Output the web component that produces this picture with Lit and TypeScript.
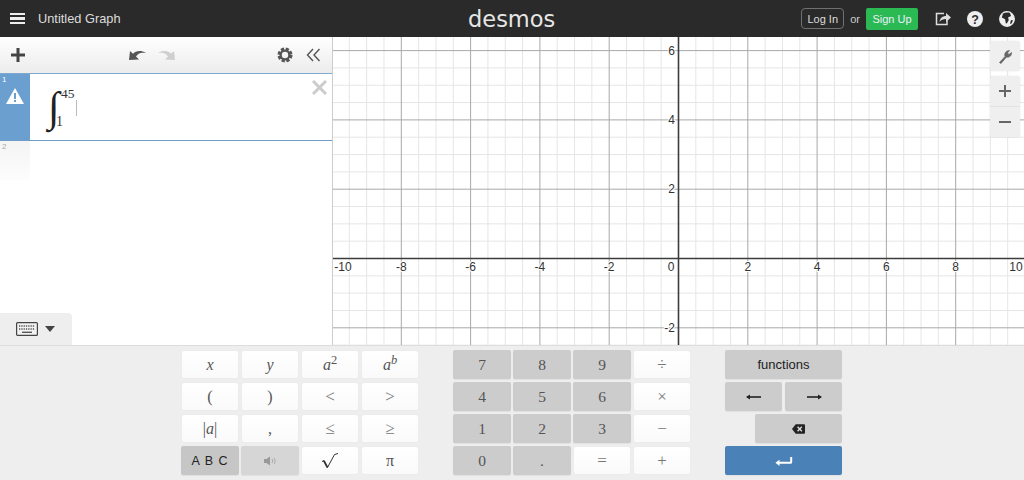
import { LitElement, html, css, svg } from "lit";
import { customElement } from "lit/decorators.js";

const W = 692, H = 308, OX = 345.5, OY = 221.5, U = 34.65;

function graph() {
  const minor: unknown[] = [];
  const major: unknown[] = [];
  const labels: unknown[] = [];
  for (let i = -20; i <= 24; i++) {
    const x = OX + (i * U) / 2;
    if (i === 0) continue;
    if (i % 4 === 0) major.push(svg`<line class="maj" x1=${x} x2=${x} y1="0" y2=${H}></line>`);
    else minor.push(svg`<line class="min" x1=${x} x2=${x} y1="0" y2=${H}></line>`);
  }
  for (let i = -6; i <= 14; i++) {
    const y = OY - (i * U) / 2;
    if (i === 0) continue;
    if (i % 4 === 0) major.push(svg`<line class="maj" x1="0" x2=${W} y1=${y} y2=${y}></line>`);
    else minor.push(svg`<line class="min" x1="0" x2=${W} y1=${y} y2=${y}></line>`);
  }
  for (const n of [-10, -8, -6, -4, -2, 2, 4, 6, 8, 10]) {
    const x = n === -10 ? 10 : n === 10 ? 683 : OX + n * U;
    labels.push(svg`<text class="lab" x=${x} y="234" text-anchor="middle">${n}</text>`);
  }
  labels.push(svg`<text class="lab" x="338" y="234" text-anchor="middle">0</text>`);
  for (const n of [6, 4, 2, -2]) {
    labels.push(svg`<text class="lab" x="342" y=${OY - n * U + 4} text-anchor="end">${n}</text>`);
  }
  return svg`<svg class="plot" width=${W} height=${H} viewBox="0 0 ${W} ${H}">
    ${minor}${major}
    <line class="axis" x1="0" x2=${W} y1=${OY} y2=${OY}></line>
    <line class="axis" x1=${OX} x2=${OX} y1="0" y2=${H}></line>
    ${labels}
  </svg>`;
}

const gear = html`<svg width="16" height="16" viewBox="0 0 16 16"><circle cx="8" cy="8" r="6" fill="none" stroke="#555" stroke-width="3" stroke-dasharray="3.1 1.61"></circle><circle cx="8" cy="8" r="4.4" fill="none" stroke="#555" stroke-width="2.4"></circle></svg>`;

const arrowL = html`<svg width="16" height="8" viewBox="0 0 16 8"><path d="M1 4h14" stroke="#222" stroke-width="1.6"></path><path d="M0 4l4-2.6v5.2z" fill="#222"></path></svg>`;
const arrowR = html`<svg width="16" height="8" viewBox="0 0 16 8"><path d="M1 4h14" stroke="#222" stroke-width="1.6"></path><path d="M16 4l-4-2.6v5.2z" fill="#222"></path></svg>`;
const backspace = html`<svg width="13" height="10" viewBox="0 0 14 10"><path d="M4 0h9a1 1 0 0 1 1 1v8a1 1 0 0 1-1 1H4L0 5z" fill="#222"></path><path d="M6 2.6l4.6 4.8M10.6 2.6L6 7.4" stroke="#ddd" stroke-width="1.5"></path></svg>`;
const enter = html`<svg width="18" height="10" viewBox="0 0 20 11"><path d="M18 1v5.500a1 1 0 0 1-1 1H3" fill="none" stroke="#fff" stroke-width="2.200"></path><path d="M0.5 7.500L5 4v7z" fill="#fff"></path></svg>`;
const speaker = html`<svg width="13" height="10" viewBox="0 0 13 10"><path d="M0 3h2.5L6 .5v9L2.5 7H0z" fill="#999"></path><path d="M8 3c.8 1.200.8 2.800 0 4M10 1.800c1.400 2 1.400 4.400 0 6.400" fill="none" stroke="#aaa" stroke-width="1"></path></svg>`;
const sqrt = html`<svg width="18" height="17" viewBox="0 0 18 17"><path d="M1 9.500l1.800-.9L6.500 15.500 13.500 2.500 17 1.500" fill="none" stroke="#333" stroke-width="1"></path><path d="M2.800 8.600L6.500 15.500" stroke="#333" stroke-width="1.800"></path></svg>`;

type Key = { k: unknown; c?: string };
const left: Key[] = [
  { k: html`<i>x</i>`, c: "m" }, { k: html`<i>y</i>`, c: "m" },
  { k: html`<i>a</i><sup>2</sup>`, c: "m" }, { k: html`<i>a</i><sup><i>b</i></sup>`, c: "m" },
  { k: "(", c: "m" }, { k: ")", c: "m" }, { k: "<", c: "m lite" }, { k: ">", c: "m lite" },
  { k: html`|<i>a</i>|`, c: "m" }, { k: ",", c: "m" }, { k: "≤", c: "m lite" }, { k: "≥", c: "m lite" },
  { k: "A B C", c: "abc dark" }, { k: speaker, c: "mute" }, { k: sqrt, c: "m" }, { k: "π", c: "m" },
];
const mid: Key[] = [
  { k: "7", c: "g" }, { k: "8", c: "g" }, { k: "9", c: "g" }, { k: "÷", c: "m lite" },
  { k: "4", c: "g" }, { k: "5", c: "g" }, { k: "6", c: "g" }, { k: "×", c: "m lite" },
  { k: "1", c: "g" }, { k: "2", c: "g" }, { k: "3", c: "g" }, { k: "−", c: "m lite" },
  { k: "0", c: "g" }, { k: ".", c: "g" }, { k: "=", c: "m lite" }, { k: "+", c: "m lite" },
];

@customElement("app-root")
export class AppRoot extends LitElement {
  static styles = css`
    :host { display: flex; flex-direction: column; width: 1024px; height: 480px; overflow: hidden; font-family: "Liberation Sans", Arial, sans-serif; background: #fff; position: relative; }
    .top { flex: 0 0 37px; background: #2a2a2a; display: flex; align-items: center; color: #e8e8e8; position: relative; }
    .burger { margin-left: 10px; width: 15px; height: 12px; display: flex; flex-direction: column; justify-content: space-between; }
    .burger span { height: 2.4px; background: #eee; }
    .title { margin-left: 13px; font-size: 12.800px; color: #ddd; }
    .logo { position: absolute; left: 468px; top: 4px; font-family: "DejaVu Sans", sans-serif; font-size: 22.500px; font-weight: 400; color: #e6e6e6; line-height: 30px; }
    .right { margin-left: auto; display: flex; align-items: center; padding-right: 9px; }
    .login { width: 43px; height: 21px; box-sizing: border-box; border: 1px solid #707070; border-radius: 4px; font-size: 11px; display: flex; align-items: center; justify-content: center; color: #ddd; }
    .or { font-size: 11px; margin: 0 6px; color: #ccc; }
    .signup { width: 52px; height: 22px; background: #2bb954; border-radius: 2px; font-size: 11px; display: flex; align-items: center; justify-content: center; color: #eef; }
    .ic { display: flex; margin-left: 16px; }
    .ic.first { margin-left: 17px; }
    .main { flex: 1 1 auto; display: flex; min-height: 0; position: relative; }
    .panel { width: 332px; flex: none; border-right: 1px solid #ccc; display: flex; flex-direction: column; background: #fff; }
    .tools { flex: 0 0 36px; background: linear-gradient(#fff, #ececec); display: flex; align-items: center; position: relative; }
    .tools > * { position: absolute; display: flex; }
    .plus { left: 11px; top: 11px; }
    .undo { left: 128px; top: 11px; }
    .redo { left: 157px; top: 11px; }
    .gear { left: 277px; top: 10px; }
    .coll { left: 306px; top: 11px; }
    .expr { height: 68px; box-sizing: border-box; border-top: 1px solid #7fa9d1; border-bottom: 1px solid #6f9dc9; display: flex; }
    .tab { width: 30px; flex: none; position: relative; font-size: 8px; }
    .expr .tab { background: #6a9fd0; color: #fff; }
    .warn { position: absolute; left: 6px; top: 14px; display: flex; }
    .no { position: absolute; left: 2px; top: 1px; }
    .math { flex: 1; position: relative; font-family: "Liberation Serif", serif; color: #222; }
    .int { position: absolute; left: 18px; top: 11px; font-size: 42px; line-height: 44px; letter-spacing: -3px; font-family: "Liberation Serif", serif; }
    .hi { position: absolute; left: 31px; top: 13px; font-size: 13.500px; line-height: 14px; color: #333; }
    .lo { position: absolute; left: 26px; top: 41px; font-size: 14px; line-height: 14px; color: #333; }
    .caret { position: absolute; left: 46px; top: 26px; width: 1px; height: 16px; background: #bbb; }
    .x { position: absolute; right: 5px; top: 6px; display: flex; }
    .next { height: 39px; display: flex; }
    .next .tab { background: linear-gradient(#f4f4f4, #fdfdfd); color: #aaa; }
    .graph { flex: 1; position: relative; overflow: hidden; }
    .plot { display: block; }
    .min { stroke: #e6e6e6; stroke-width: 1; }
    .maj { stroke: #a8a8a8; stroke-width: 1; }
    .axis { stroke: #3c3c3c; stroke-width: 1.600; }
    .lab { font-size: 12px; fill: #333; paint-order: stroke; stroke: #fff; stroke-width: 2px; font-family: "Liberation Sans", sans-serif; }
    .gbtns { position: absolute; left: 657px; top: 4px; width: 30px; display: flex; flex-direction: column; gap: 5px; }
    .gb { width: 30px; background: #efefef; border-radius: 3px; display: flex; flex-direction: column; align-items: center; box-shadow: 0 0 2px rgba(0,0,0,.1); }
    .gb span { height: 30px; display: flex; align-items: center; justify-content: center; }
    .gb span + span { border-top: 1px solid #e2e2e2; width: 100%; }
    .kbd { position: absolute; left: 0; bottom: 0; width: 72px; height: 32px; background: #eee; border-radius: 0 4px 0 0; display: flex; align-items: center; padding-left: 16px; box-sizing: border-box; gap: 7px; }
    .pad { flex: 0 0 135px; box-sizing: border-box; background: #eee; border-top: 1px solid #ddd; display: flex; justify-content: center; gap: 34px; padding: 4px 1px 0 0; }
    .grid { display: grid; grid-template-columns: repeat(4, 58px); grid-auto-rows: 29px; gap: 3px 2px; }
    .fn { display: grid; grid-template-columns: repeat(4, 27px); grid-auto-rows: 29px; gap: 3px; }
    .key { display: flex; align-items: center; justify-content: center; border-radius: 2px; font-family: "Liberation Serif", serif; font-size: 15px; color: #444; background: #ccc; box-shadow: 0 1px 1px rgba(0,0,0,.06); }
    .key.m { background: linear-gradient(#fff, #fafafa); margin: 1px; box-shadow: 0 0 1px rgba(0,0,0,.1); font-size: 16px; color: #555; }
    .key.lite { color: #777; font-size: 17px; }
    .key sup { font-size: 12.500px; line-height: 0; position: relative; top: -5px; }
    .key.g { font-size: 15.500px; color: #555; background: #ccc; }
    .key.dark { background: #c6c6c6; }
    .key.abc { font-family: "Liberation Sans", sans-serif; font-size: 12.500px; letter-spacing: 1px; color: #222; }
    .key.mute { background: #d6d6d6; }
    .key.sans { font-family: "Liberation Sans", sans-serif; font-size: 13px; color: #222; }
    .s4 { grid-column: span 4; }
    .s2 { grid-column: span 2; }
    .s3 { grid-column: 2 / span 3; }
    .key.go { background: #4a82b8; }
  `;

  render() {
    return html`
      <div class="top">
        <div class="burger"><span></span><span></span><span></span></div>
        <div class="title">Untitled Graph</div>
        <div class="logo">desmos</div>
        <div class="right">
          <div class="login">Log In</div>
          <div class="or">or</div>
          <div class="signup">Sign Up</div>
          <div class="ic first"><svg width="16" height="15" viewBox="0 0 16 15"><path d="M9 2.500H1.500v11h10.500V9.500" fill="none" stroke="#ddd" stroke-width="1.500"></path><path d="M4.500 11c.5-4 3-6 6.500-6V2l5 4.500-5 4.500V8c-3 0-4.800.8-6.500 3z" fill="#ddd"></path></svg></div>
          <div class="ic"><svg width="16" height="16" viewBox="0 0 16 16"><circle cx="8" cy="8" r="8" fill="#eee"></circle><text x="8" y="12.500" text-anchor="middle" font-size="12.500" font-weight="700" font-family="Liberation Sans" fill="#2a2a2a">?</text></svg></div>
          <div class="ic"><svg width="16" height="16" viewBox="0 0 16 16"><circle cx="8" cy="8" r="7.200" fill="#eee" stroke="#eee" stroke-width="1.500"></circle><path d="M4 2.500c2-1 5-1.200 7-.5l1 3-3 1.500.8 2.500-2 3.500-1-.2-.7-4-3.300-1.800z M12 9l2 .5-1.500 3-1.500.5z" fill="#2a2a2a"></path></svg></div>
        </div>
      </div>
      <div class="main">
        <div class="panel">
          <div class="tools">
            <span class="plus"><svg width="14" height="14" viewBox="0 0 14 14"><path d="M7 0v14M0 7h14" stroke="#444" stroke-width="3"></path></svg></span>
            <span class="undo"><svg width="19" height="13" viewBox="0 0 19 13"><path d="M1 12L2 3l3 2.800C8 2.500 13 2 18 5 13 4 10 5 8 8.500l3 3z" fill="#555"></path></svg></span>
            <span class="redo"><svg width="19" height="13" viewBox="0 0 19 13"><path d="M18 12L17 3l-3 2.800C11 2.500 6 2 1 5c5-1 8 0 10 3.500l-3 3z" fill="#cfcfcf"></path></svg></span>
            <span class="gear">${gear}</span>
            <span class="coll"><svg width="15" height="14" viewBox="0 0 15 14"><path d="M7 1L1.500 7 7 13M13.500 1L8 7l5.500 6" fill="none" stroke="#555" stroke-width="1.400"></path></svg></span>
          </div>
          <div class="expr">
            <div class="tab">
              <span class="no">1</span>
              <span class="warn"><svg width="18" height="16" viewBox="0 0 18 16"><path d="M9 0l9 16H0z" fill="#fff"></path><path d="M9 5v6" stroke="#6a9fd0" stroke-width="2"></path><path d="M9 12v2" stroke="#6a9fd0" stroke-width="2"></path></svg></span>
            </div>
            <div class="math">
              <span class="int">∫</span>
              <span class="hi">45</span>
              <span class="lo">1</span>
              <span class="caret"></span>
              <span class="x"><svg width="15" height="15" viewBox="0 0 15 15"><path d="M1 1l13 13M14 1L1 14" stroke="#ccc" stroke-width="3"></path></svg></span>
            </div>
          </div>
          <div class="next"><div class="tab"><span class="no">2</span></div></div>
        </div>
        <div class="graph">
          ${graph()}
          <div class="gbtns">
            <div class="gb"><span><svg width="15" height="15" viewBox="0 0 15 15"><path d="M1.500 13.500L7 7.500C6 4.500 8 1.500 11.500 1.500l-2 2.500 1.500 1.500 2.500-2c.5 3-2.500 5.500-5 4.500L3 14.500z" fill="#666" stroke="#666" stroke-width=".7"></path></svg></span></div>
            <div class="gb">
              <span><svg width="12" height="12" viewBox="0 0 12 12"><path d="M6 0v12M0 6h12" stroke="#666" stroke-width="2"></path></svg></span>
              <span><svg width="12" height="4" viewBox="0 0 12 4"><path d="M0 2h12" stroke="#666" stroke-width="2"></path></svg></span>
            </div>
          </div>
        </div>
        <div class="kbd">
          <svg width="22" height="14" viewBox="0 0 22 14"><rect x=".6" y=".6" width="20.800" height="12.800" rx="1" fill="#f2f2f2" stroke="#444" stroke-width="1.200"></rect><path d="M3 4h16M3 7h16" stroke="#555" stroke-width="1.300" stroke-dasharray="1.300 1"></path><path d="M6 10.300h10" stroke="#555" stroke-width="1.400"></path></svg>
          <svg width="10" height="6" viewBox="0 0 10 6"><path d="M0 0h10L5 6z" fill="#444"></path></svg>
        </div>
      </div>
      <div class="pad">
        <div class="grid">${left.map((x) => html`<div class="key ${x.c ?? ""}">${x.k}</div>`)}</div>
        <div class="grid">${mid.map((x) => html`<div class="key ${x.c ?? ""}">${x.k}</div>`)}</div>
        <div class="fn">
          <div class="key sans s4">functions</div>
          <div class="key s2">${arrowL}</div>
          <div class="key s2">${arrowR}</div>
          <div class="key s3">${backspace}</div>
          <div class="key s4 go">${enter}</div>
        </div>
      </div>
    `;
  }
}
